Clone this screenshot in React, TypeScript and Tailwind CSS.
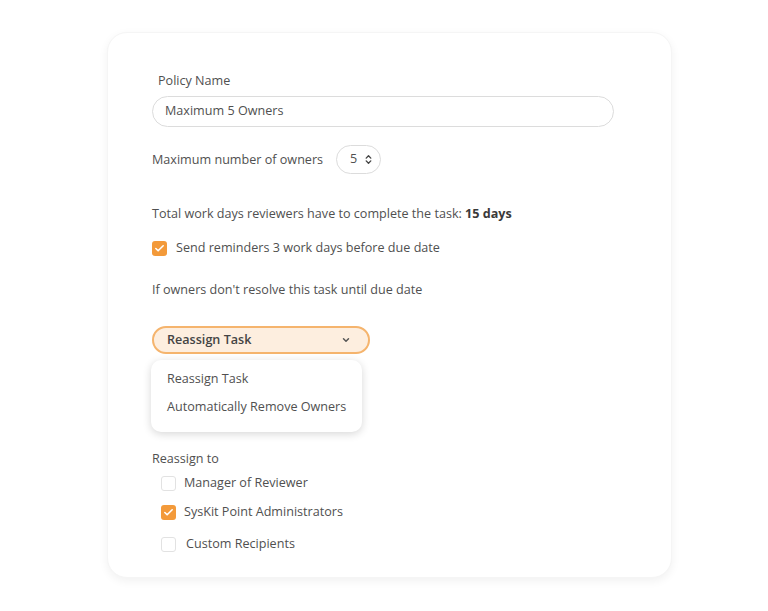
import { Check, ChevronDown, ChevronsUpDown } from "lucide-react";

function Box({ checked }: { checked?: boolean }) {
  return checked ? (
    <span className="flex h-[15px] w-[15px] items-center justify-center rounded-[3px] bg-[#f39a3a]">
      <Check className="h-[11px] w-[11px] text-white" strokeWidth={3.5} />
    </span>
  ) : (
    <span className="h-[15px] w-[15px] rounded-[3px] border border-[#e2e2e2] bg-white" />
  );
}

export default function App() {
  return (
    <div className="min-h-[611px] bg-white pt-[32px] font-['Open_Sans',sans-serif] text-[12.6px] text-[#505050]">
      <div className="ml-[107px] h-[546px] w-[565px] rounded-[20px] border border-[#f5f5f5] bg-white pl-[44px] pt-[39px] shadow-[0_3px_10px_rgba(0,0,0,0.06)]">
        <div className="pl-[6px] leading-[18px]">Policy Name</div>
        <div className="mt-[6px] flex h-[31px] w-[462px] items-center rounded-full border border-[#dcdcdc] pl-[12px]">
          Maximum 5 Owners
        </div>

        <div className="mt-[18px] flex items-center">
          <span className="leading-[18px]">Maximum number of owners</span>
          <div className="ml-[13px] flex h-[29px] w-[45px] items-center rounded-full border border-[#dcdcdc] pl-[13px]">
            <span>5</span>
            <ChevronsUpDown className="ml-[6px] h-[11px] w-[11px] text-[#444]" strokeWidth={3} />
          </div>
        </div>

        <div className="mt-[31px] leading-[18px]">
          Total work days reviewers have to complete the task: <b className="font-bold text-[#3a3a3a]">15 days</b>
        </div>

        <label className="mt-[16px] flex items-center gap-[9px] leading-[18px]">
          <Box checked />
          Send reminders 3 work days before due date
        </label>

        <div className="mt-[24px] leading-[18px]">If owners don't resolve this task until due date</div>

        <div className="relative mt-[27px]">
          <div className="flex h-[28px] w-[218px] items-center justify-between rounded-full border-2 border-[#f5b46d] bg-[#fdeedf] pl-[13px] pr-[17px] font-semibold text-[#444]">
            Reassign Task
            <ChevronDown className="h-[10px] w-[10px] text-[#555]" strokeWidth={3.5} />
          </div>
          <div className="absolute left-[-1px] top-[34px] h-[72px] w-[211px] rounded-[10px] bg-white py-[10px] pl-[16px] shadow-[0_2px_8px_rgba(0,0,0,0.16)]">
            <div className="leading-[18px]">Reassign Task</div>
            <div className="mt-[10px] leading-[18px]">Automatically Remove Owners</div>
          </div>
        </div>

        <div className="mt-[96px] leading-[18px]">Reassign to</div>
        <div className="ml-[9px] mt-[6px] flex flex-col">
          <label className="flex items-center gap-[8px] leading-[18px]">
            <Box />
            Manager of Reviewer
          </label>
          <label className="mt-[11px] flex items-center gap-[8px] leading-[18px]">
            <Box checked />
            SysKit Point Administrators
          </label>
          <label className="mt-[14px] flex items-center gap-[10px] leading-[18px]">
            <Box />
            Custom Recipients
          </label>
        </div>
      </div>
    </div>
  );
}
